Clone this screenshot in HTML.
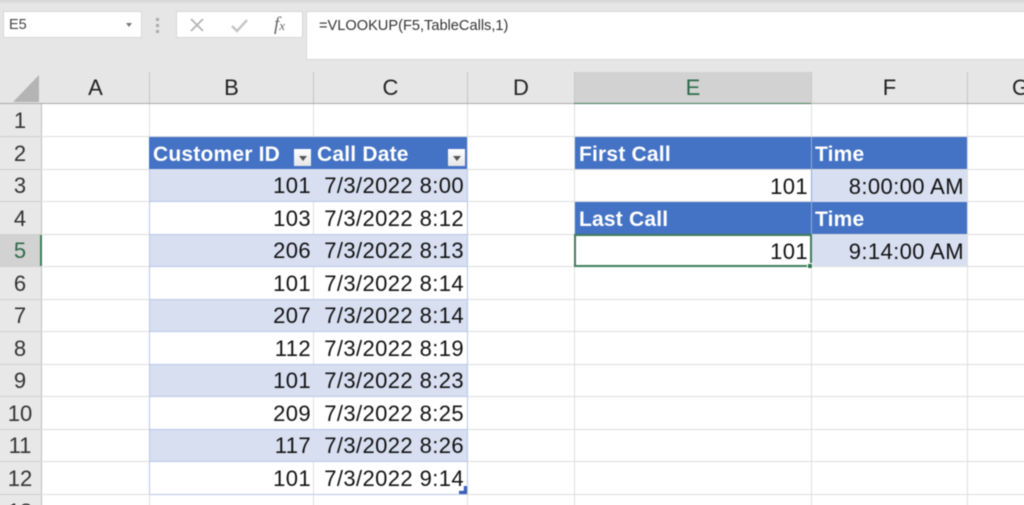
<!DOCTYPE html>
<html><head><meta charset="utf-8">
<style>
html,body{margin:0;padding:0;background:#fff;width:1024px;height:505px;overflow:hidden}
#p{position:relative;width:1024px;height:505px;background:#fff;font-family:"Liberation Sans",sans-serif;color:#111;filter:blur(.42px)}
#p div{position:absolute}
.t{white-space:nowrap;font-size:22px;letter-spacing:.4px;line-height:32px;height:32px;margin-top:1px}
.r{text-align:right}
.c{text-align:center}
.w{color:#fff;font-weight:bold;font-size:21px;letter-spacing:.2px;margin-top:2px}
.h{color:#222;font-size:22px;letter-spacing:0;margin-top:0}
.n{color:#333;font-size:22px;letter-spacing:0}
.hl{background:#dedede;height:1px;left:41px;width:1000px}
.vl{background:#dedede;width:1px;top:104px;height:420px}
.band{background:#d7dff1;left:149px;width:318px;height:32px}
.hd{background:#4472c4;height:32px}
.btn{width:17px;height:17px;background:linear-gradient(#fff,#e6e6e6)}
.btn:after{content:"";position:absolute;left:5px;top:7px;border:4px solid transparent;border-top:5px solid #555;border-bottom:0}
.rs{left:-10px;width:51px;height:1px;background:#cfcfcf}
.cs{top:72px;width:1px;height:31px;background:#c6c6c6}
.tl{left:149px;width:318px;height:1px;background:#b9c8e6}
</style></head><body>
<div id="p">
<!-- top chrome -->
<div style="left:-10px;top:-10px;width:1050px;height:114px;background:#e6e6e6"></div>
<div style="left:-10px;top:-10px;width:1050px;height:14px;background:linear-gradient(#d4d4d4 70%,#e6e6e6)"></div>
<div style="left:3px;top:11px;width:137px;height:25px;background:#fff;border:1px solid #d6d6d6"></div>
<div style="left:9px;top:12px;font-size:14.5px;line-height:27px;color:#444">E5</div>
<div style="left:126px;top:23px;border:3px solid transparent;border-top:4px solid #777;border-bottom:0"></div>
<div style="left:156px;top:18px;width:3px;height:3px;background:#aaa"></div>
<div style="left:156px;top:24px;width:3px;height:3px;background:#aaa"></div>
<div style="left:156px;top:30px;width:3px;height:3px;background:#aaa"></div>
<div style="left:176px;top:11px;width:125px;height:25px;background:#fff;border:1px solid #d6d6d6"></div>
<svg style="position:absolute;left:176px;top:11px" width="127" height="27" viewBox="0 0 127 27">
<path d="M15 8L27 20M27 8L15 20" stroke="#b4b4b4" stroke-width="1.8" fill="none"/>
<path d="M56 15L61 20L71 9" stroke="#c4c4c4" stroke-width="2.4" fill="none"/>
<text x="98" y="19" font-family="Liberation Serif,serif" font-style="italic" font-size="19" fill="#666">f<tspan font-size="13" dy="0">x</tspan></text>
</svg>
<div style="left:306px;top:11px;width:738px;height:47px;background:#fff;border-left:1px solid #d6d6d6;border-top:1px solid #d6d6d6;border-bottom:1px solid #d6d6d6"></div>
<div style="left:319px;top:12px;font-size:14.6px;line-height:28px;color:#333;white-space:nowrap">=VLOOKUP(F5,TableCalls,1)</div>

<!-- row header col -->
<div style="left:-10px;top:104px;width:51px;height:420px;background:#e8e8e8"></div>
<div style="left:13px;top:75px;width:0;height:0;border-left:26px solid transparent;border-bottom:27px solid #b4b4b4"></div>
<div style="left:41px;top:104px;width:1px;height:420px;background:#bdbdbd"></div>
<div style="left:-10px;top:103px;width:1050px;height:1px;background:#a9a9a9"></div>
<div style="left:574px;top:72px;width:237px;height:31px;background:#d2d2d2"></div>
<div style="left:574px;top:103px;width:237px;height:1px;background:#3f7c5c"></div>
<div style="left:-10px;top:234px;width:51px;height:32px;background:#d2d2d2"></div>
<div style="left:40px;top:234px;width:2px;height:32px;background:#3f7c5c"></div>
<!-- col separators in header -->
<div class="cs" style="left:149px"></div>
<div class="cs" style="left:313px"></div>
<div class="cs" style="left:467px"></div>
<div class="cs" style="left:574px"></div>
<div class="cs" style="left:811px"></div>
<div class="cs" style="left:967px"></div>

<!-- row separators on header -->
<div class="rs" style="top:136px"></div><div class="rs" style="top:169px"></div><div class="rs" style="top:201px"></div><div class="rs" style="top:234px"></div><div class="rs" style="top:266px"></div><div class="rs" style="top:299px"></div><div class="rs" style="top:331px"></div><div class="rs" style="top:364px"></div><div class="rs" style="top:396px"></div><div class="rs" style="top:429px"></div><div class="rs" style="top:461px"></div><div class="rs" style="top:494px"></div>

<!-- grid -->
<div class="hl" style="top:136px"></div><div class="hl" style="top:169px"></div><div class="hl" style="top:201px"></div><div class="hl" style="top:234px"></div><div class="hl" style="top:266px"></div><div class="hl" style="top:299px"></div><div class="hl" style="top:331px"></div><div class="hl" style="top:364px"></div><div class="hl" style="top:396px"></div><div class="hl" style="top:429px"></div><div class="hl" style="top:461px"></div><div class="hl" style="top:494px"></div>
<div class="vl" style="left:149px"></div><div class="vl" style="left:313px"></div><div class="vl" style="left:467px"></div><div class="vl" style="left:574px"></div><div class="vl" style="left:811px"></div><div class="vl" style="left:967px"></div>

<!-- table fills -->
<div class="hd" style="left:149px;top:137px;width:318px"></div>
<div class="band" style="top:169px"></div><div class="band" style="top:234px"></div><div class="band" style="top:299px"></div><div class="band" style="top:364px"></div><div class="band" style="top:429px"></div>
<div style="left:149px;top:169px;width:1px;height:325px;background:#b9c8e6"></div>
<div style="left:467px;top:169px;width:1px;height:325px;background:#b9c8e6"></div>
<div class="tl" style="top:201px"></div><div class="tl" style="top:234px"></div><div class="tl" style="top:266px"></div><div class="tl" style="top:299px"></div><div class="tl" style="top:331px"></div><div class="tl" style="top:364px"></div><div class="tl" style="top:396px"></div><div class="tl" style="top:429px"></div><div class="tl" style="top:461px"></div><div class="tl" style="top:494px"></div>
<div style="left:459px;top:486px;width:8px;height:8px;background:#3f5fb5;clip-path:polygon(100% 0,100% 100%,0 100%,0 60%,60% 60%,60% 0)"></div>

<div class="hd" style="left:575px;top:137px;width:392px"></div>
<div class="hd" style="left:575px;top:202px;width:392px"></div>
<div style="left:811px;top:137px;width:1px;height:97px;background:#8faadc"></div>
<div style="left:812px;top:170px;width:155px;height:32px;background:#d7dff1"></div>
<div style="left:812px;top:235px;width:155px;height:31px;background:#d7dff1"></div>

<!-- filter buttons -->
<div class="btn" style="left:294px;top:149px"></div>
<div class="btn" style="left:448px;top:149px"></div>

<!-- selection -->
<div style="left:574px;top:234px;width:234px;height:29px;border:2px solid #3f7c5c;box-sizing:content-box"></div>
<div style="left:807px;top:263px;width:6px;height:6px;background:#2f7a50;border:1px solid #fff;box-sizing:border-box"></div>

<!-- column letters -->
<div class="t h c" style="left:42px;top:72px;width:107px">A</div>
<div class="t h c" style="left:150px;top:72px;width:163px">B</div>
<div class="t h c" style="left:314px;top:72px;width:153px">C</div>
<div class="t h c" style="left:468px;top:72px;width:106px">D</div>
<div class="t h c" style="left:575px;top:72px;width:236px;color:#2f6b4b">E</div>
<div class="t h c" style="left:812px;top:72px;width:155px">F</div>
<div class="t h" style="left:1012px;top:72px">G</div>

<!-- row numbers -->
<div class="t n c" style="left:0;top:104px;width:40px">1</div>
<div class="t n c" style="left:0;top:137px;width:40px">2</div>
<div class="t n c" style="left:0;top:169px;width:40px">3</div>
<div class="t n c" style="left:0;top:202px;width:40px">4</div>
<div class="t n c" style="left:0;top:234px;width:40px;color:#2f6b4b">5</div>
<div class="t n c" style="left:0;top:267px;width:40px">6</div>
<div class="t n c" style="left:0;top:299px;width:40px">7</div>
<div class="t n c" style="left:0;top:332px;width:40px">8</div>
<div class="t n c" style="left:0;top:364px;width:40px">9</div>
<div class="t n c" style="left:0;top:397px;width:40px">10</div>
<div class="t n c" style="left:0;top:429px;width:40px">11</div>
<div class="t n c" style="left:0;top:462px;width:40px">12</div>
<div class="t n c" style="left:0;top:495px;width:40px">13</div>

<!-- table headers -->
<div class="t w" style="left:153px;top:137px">Customer ID</div>
<div class="t w" style="left:317px;top:137px">Call Date</div>
<div class="t w" style="left:579px;top:137px">First Call</div>
<div class="t w" style="left:815px;top:137px">Time</div>
<div class="t w" style="left:579px;top:202px">Last Call</div>
<div class="t w" style="left:815px;top:202px">Time</div>

<!-- IDs -->
<div class="t r" style="left:150px;top:169px;width:161px">101</div>
<div class="t r" style="left:150px;top:202px;width:161px">103</div>
<div class="t r" style="left:150px;top:234px;width:161px">206</div>
<div class="t r" style="left:150px;top:267px;width:161px">101</div>
<div class="t r" style="left:150px;top:299px;width:161px">207</div>
<div class="t r" style="left:150px;top:332px;width:161px">112</div>
<div class="t r" style="left:150px;top:364px;width:161px">101</div>
<div class="t r" style="left:150px;top:397px;width:161px">209</div>
<div class="t r" style="left:150px;top:429px;width:161px">117</div>
<div class="t r" style="left:150px;top:462px;width:161px">101</div>

<!-- dates -->
<div class="t r" style="left:314px;top:169px;width:150px">7/3/2022 8:00</div>
<div class="t r" style="left:314px;top:202px;width:150px">7/3/2022 8:12</div>
<div class="t r" style="left:314px;top:234px;width:150px">7/3/2022 8:13</div>
<div class="t r" style="left:314px;top:267px;width:150px">7/3/2022 8:14</div>
<div class="t r" style="left:314px;top:299px;width:150px">7/3/2022 8:14</div>
<div class="t r" style="left:314px;top:332px;width:150px">7/3/2022 8:19</div>
<div class="t r" style="left:314px;top:364px;width:150px">7/3/2022 8:23</div>
<div class="t r" style="left:314px;top:397px;width:150px">7/3/2022 8:25</div>
<div class="t r" style="left:314px;top:429px;width:150px">7/3/2022 8:26</div>
<div class="t r" style="left:314px;top:462px;width:150px">7/3/2022 9:14</div>

<!-- right table values -->
<div class="t r" style="left:600px;top:170px;width:208px">101</div>
<div class="t r" style="left:813px;top:170px;width:151px">8:00:00 AM</div>
<div class="t r" style="left:600px;top:235px;width:208px">101</div>
<div class="t r" style="left:813px;top:235px;width:151px">9:14:00 AM</div>
</div>
</body></html>
